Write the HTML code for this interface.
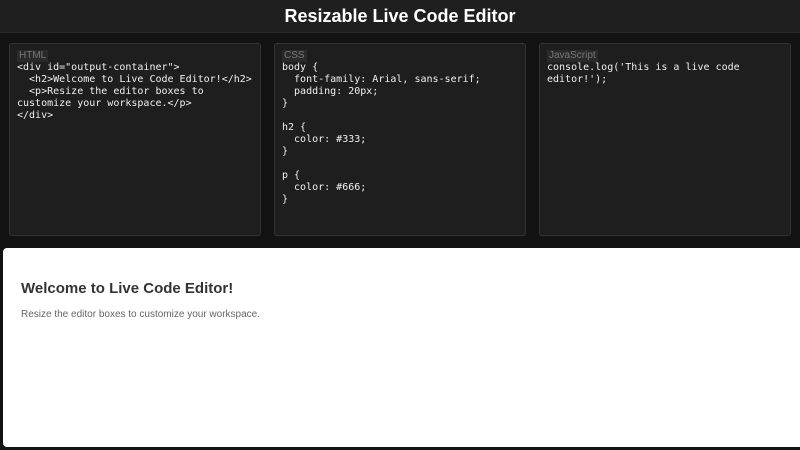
<!DOCTYPE html>
<html><head><style>
*{margin:0;padding:0;box-sizing:border-box}
body{width:800px;height:450px;background:#131313;font-family:"Liberation Sans",sans-serif;overflow:hidden;position:relative}
.hdr{height:33px;background:#1f1f1f;border-bottom:1px solid #2a2a2a;color:#fff;font-weight:bold;font-size:18px;text-align:center;line-height:33px}
.box{position:absolute;top:43px;width:252px;height:193px;background:#1e1e1e;border:1px solid #333;border-radius:3px}
.lab{position:absolute;left:7px;top:6px;font-size:10px;color:#777;background:#2a2a2a;padding:0 2px;line-height:12px}
pre{position:absolute;left:7px;top:18px;font-family:"DejaVu Sans Mono",monospace;font-size:10px;line-height:12px;color:#f0f0f0;white-space:pre}
.out{position:absolute;left:3px;top:248px;width:797px;height:199px;background:#fff;border-radius:4px 0 0 4px}
.out h2{position:absolute;left:18px;top:32px;font-size:15px;color:#333}
.out p{position:absolute;left:18px;top:61px;font-size:10px;color:#666}
</style></head><body>
<div class="hdr">Resizable Live Code Editor</div>
<div class="box" style="left:9px"><span class="lab">HTML</span><pre>&lt;div id="output-container"&gt;
  &lt;h2&gt;Welcome to Live Code Editor!&lt;/h2&gt;
  &lt;p&gt;Resize the editor boxes to
customize your workspace.&lt;/p&gt;
&lt;/div&gt;</pre></div>
<div class="box" style="left:274px"><span class="lab">CSS</span><pre>body {
  font-family: Arial, sans-serif;
  padding: 20px;
}

h2 {
  color: #333;
}

p {
  color: #666;
}</pre></div>
<div class="box" style="left:539px"><span class="lab">JavaScript</span><pre>console.log('This is a live code
editor!');</pre></div>
<div class="out"><h2>Welcome to Live Code Editor!</h2><p>Resize the editor boxes to customize your workspace.</p></div>
</body></html>
